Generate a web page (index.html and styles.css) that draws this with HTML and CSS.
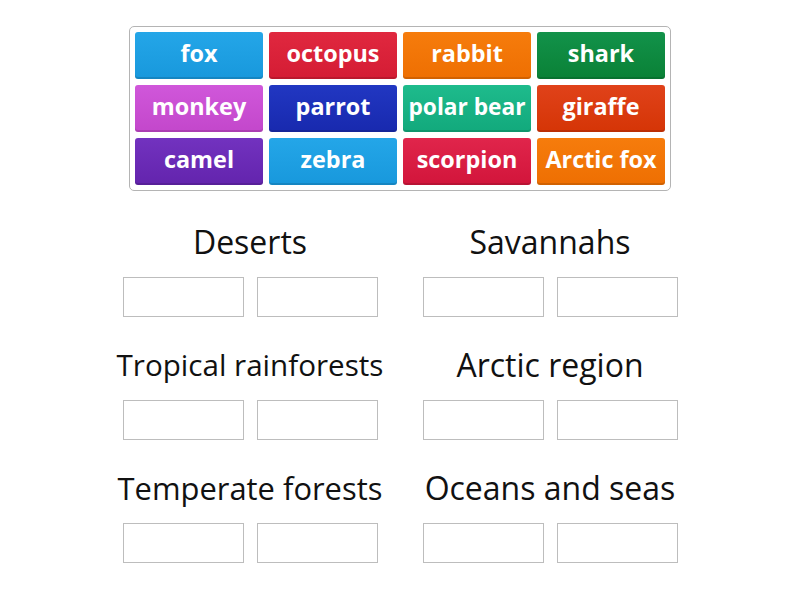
FILE: index.html
```html
<!DOCTYPE html>
<html>
<head>
<meta charset="utf-8">
<link rel="stylesheet" href="styles.css">
</head>
<body>
<div class="page">
  <div class="bank">
    <div class="tile c-blue">fox</div>
    <div class="tile c-red">octopus</div>
    <div class="tile c-orange">rabbit</div>
    <div class="tile c-green">shark</div>
    <div class="tile c-pink">monkey</div>
    <div class="tile c-navy">parrot</div>
    <div class="tile c-teal tile-fit">polar bear</div>
    <div class="tile c-rust">giraffe</div>
    <div class="tile c-purple">camel</div>
    <div class="tile c-blue">zebra</div>
    <div class="tile c-crimson">scorpion</div>
    <div class="tile c-orange">Arctic fox</div>
  </div>
  <div class="groups">
    <div class="group">
      <div class="title">Deserts</div>
      <div class="slots"><div class="slot"></div><div class="slot"></div></div>
    </div>
    <div class="group">
      <div class="title">Savannahs</div>
      <div class="slots"><div class="slot"></div><div class="slot"></div></div>
    </div>
    <div class="group">
      <div class="title title-fit-a">Tropical rainforests</div>
      <div class="slots"><div class="slot"></div><div class="slot"></div></div>
    </div>
    <div class="group">
      <div class="title">Arctic region</div>
      <div class="slots"><div class="slot"></div><div class="slot"></div></div>
    </div>
    <div class="group">
      <div class="title title-fit-b">Temperate forests</div>
      <div class="slots"><div class="slot"></div><div class="slot"></div></div>
    </div>
    <div class="group">
      <div class="title">Oceans and seas</div>
      <div class="slots"><div class="slot"></div><div class="slot"></div></div>
    </div>
  </div>
</div>
</body>
</html>
```
FILE: styles.css
```css
html, body {
  margin: 0;
  padding: 0;
  background: #ffffff;
}
body {
  font-family: "Open Sans", "Noto Sans", sans-serif;
  color: #111111;
}
.page {
  width: 600px;
  margin: 0 auto;
  padding-top: 26px;
}
.bank {
  box-sizing: border-box;
  width: 542px;
  margin: 0 auto;
  padding: 5px;
  border: 1px solid #b4b4b4;
  border-radius: 5px;
  display: grid;
  grid-template-columns: repeat(4, 1fr);
  grid-auto-rows: 47px;
  gap: 6px;
}
.tile {
  box-sizing: border-box;
  display: flex;
  align-items: center;
  justify-content: center;
  padding-bottom: 5px;
  border-radius: 3px;
  color: #ffffff;
  font-weight: 700;
  font-size: 23.4px;
  white-space: nowrap;
  box-shadow: inset 0 -2px 0 rgba(0,0,0,0.12);
}
.tile-fit { font-size: 22.7px; }
.c-blue { background: linear-gradient(#24a6e8, #1898dc); }
.c-red { background: linear-gradient(#e0283f, #d41c34); }
.c-orange { background: linear-gradient(#f67c0c, #ee6f02); }
.c-green { background: linear-gradient(#12924a, #0a8136); }
.c-pink { background: linear-gradient(#d057da, #c347cb); }
.c-navy { background: linear-gradient(#2137c2, #1829ae); }
.c-teal { background: linear-gradient(#1ebb8c, #12a97c); }
.c-rust { background: linear-gradient(#e0421a, #d53506); }
.c-purple { background: linear-gradient(#7232bf, #6324ad); }
.c-crimson { background: linear-gradient(#e0254b, #d2153b); }
.groups {
  margin-top: 31px;
  display: grid;
  grid-template-columns: 300px 300px;
  row-gap: 28px;
}
.group {
  display: flex;
  flex-direction: column;
  align-items: center;
}
.title {
  font-size: 32px;
  line-height: 40px;
  height: 40px;
  color: #111111;
  white-space: nowrap;
}
.title-fit-a { font-size: 29.6px; }
.title-fit-b { font-size: 30.9px; }
.slots {
  margin-top: 15px;
  display: flex;
  gap: 13px;
}
.slot {
  box-sizing: border-box;
  width: 121px;
  height: 40px;
  border: 1px solid #bdbdbd;
  background: #ffffff;
}
```
